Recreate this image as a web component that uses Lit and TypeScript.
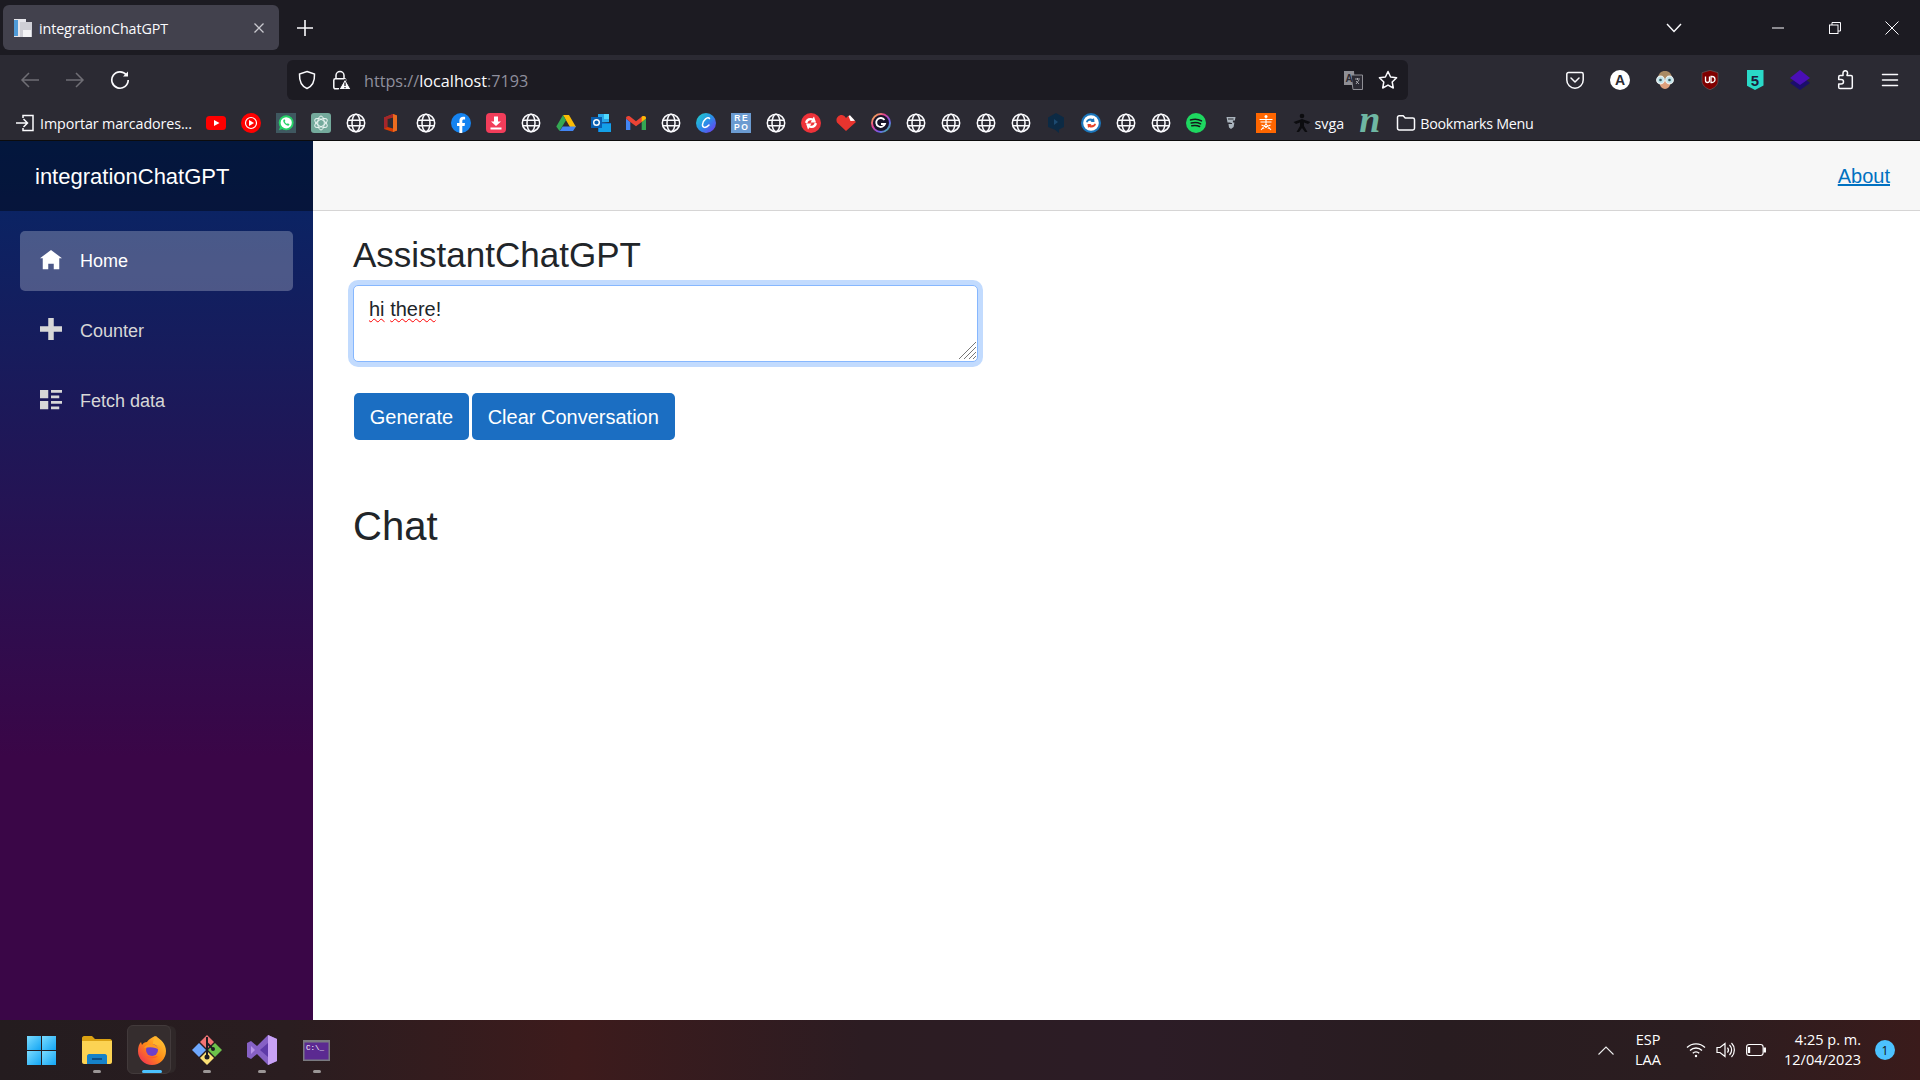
import { LitElement, html, svg, css, TemplateResult } from "lit";
import { customElement } from "lit/decorators.js";

const globe = html`<svg class="i20" viewBox="0 0 20 20" fill="none" stroke="#fbfbfe" stroke-width="1.5"><circle cx="10" cy="10" r="8.7"/><ellipse cx="10" cy="10" rx="4" ry="8.7"/><path d="M1.6 7.2h16.8M1.6 12.8h16.8"/></svg>`;

const bookmarks: TemplateResult[] = [
  html`<svg class="i20" viewBox="0 0 20 20"><rect y="3" width="20" height="14" rx="3.5" fill="#f00"/><path d="M8 7l5.5 3L8 13z" fill="#fff"/></svg>`,
  html`<svg class="i20" viewBox="0 0 20 20"><circle cx="10" cy="10" r="10" fill="#f00"/><circle cx="10" cy="10" r="5.5" fill="none" stroke="#fff" stroke-width="1.2"/><path d="M8 7l5 3-5 3z" fill="#fff"/></svg>`,
  html`<svg class="i20" viewBox="0 0 20 20"><rect width="20" height="20" fill="#3f5860"/><circle cx="10.2" cy="9.8" r="7.5" fill="#25d366"/><path d="M3 17.2l1.3-4.4 3 3z" fill="#25d366"/><circle cx="10.2" cy="9.8" r="5.6" fill="#fff"/><path d="M7.6 6.8c-1 1 .1 3.2 1.5 4.4s3.2 2 4 1.1l.4-1-1.8-1-.7.7c-1-.4-1.8-1.2-2.3-2.2l.7-.7-.8-1.8z" fill="#25d366"/></svg>`,
  html`<svg class="i20" viewBox="0 0 20 20"><rect width="20" height="20" rx="3" fill="#74aa9c"/><g fill="none" stroke="#e8f3f0" stroke-width="1"><ellipse cx="10" cy="10" rx="3.3" ry="7"/><ellipse cx="10" cy="10" rx="3.3" ry="7" transform="rotate(60 10 10)"/><ellipse cx="10" cy="10" rx="3.3" ry="7" transform="rotate(120 10 10)"/></g></svg>`,
  globe,
  html`<svg class="i20" viewBox="0 0 20 20"><path d="M3 4.5L12 1l4 1.5v15L12 19l-9-3z" fill="#d83b01"/><path d="M3 4.5L12 1v3L6.5 6v8L3 16z" fill="#a4262c"/><path d="M6.5 6L12 4.5v11l-5.500-1.500z" fill="#2b2a33"/><path d="M12 1l4 1.500v15L12 19z" fill="#eb6c1f"/></svg>`,
  globe,
  html`<svg class="i20" viewBox="0 0 20 20"><circle cx="10" cy="10" r="10" fill="#1583f0"/><path d="M8.400 20v-7H6v-3h2.400V7.800c0-2.600 1.500-4 3.800-4 1 0 1.900.2 1.900.2v2.500h-1.200c-1.200 0-1.600.7-1.600 1.500V10H14l-.4 3h-2.300v7z" fill="#fff"/></svg>`,
  html`<svg class="i20" viewBox="0 0 20 20"><rect width="20" height="20" rx="4" fill="#f23d5a"/><path d="M8 3.500h4v5h3l-5 4.500-5-4.500h3z" fill="#fff"/><rect x="4.500" y="14.500" width="11" height="2" fill="#fff"/></svg>`,
  globe,
  html`<svg class="i20" viewBox="0 0 20 20"><path d="M7 2h6l7 12h-6z" fill="#fbbc04"/><path d="M7 2l3 5.200L3.500 18 .3 13.500z" fill="#34a853"/><path d="M6.700 13.500H20L17 18H3.700z" fill="#4285f4"/></svg>`,
  html`<svg class="i20" viewBox="0 0 20 20"><path d="M7 1h11v8H7z" fill="#28a8ea"/><path d="M13 1h5v5h-5z" fill="#50d9ff"/><path d="M7 9l13 1v9H7z" fill="#0f78d4"/><path d="M8 11l12 0v8H8z" fill="#14a0e8"/><rect y="4" width="11" height="11" fill="#0a5fb0"/><circle cx="5.500" cy="9.500" r="2.800" fill="none" stroke="#fff" stroke-width="1.400"/></svg>`,
  html`<svg class="i20" viewBox="0 0 20 20"><path d="M0 5.500V17h4.300V9z" fill="#4285f4"/><path d="M15.700 9v8H20V5.500z" fill="#34a853"/><path d="M0 5.500c0-2.500 2.500-3 4-2l6 4.800 6-4.800c1.500-1 4-.5 4 2L15.700 9 10 13.300 4.300 9 0 5.500z" fill="#ea4335"/><path d="M15.700 3.800v5.200L20 5.500c0-2.500-2.700-3-4.300-1.700z" fill="#fbbc04"/></svg>`,
  globe,
  html`<svg class="i20" viewBox="0 0 20 20"><defs><linearGradient id="cv" x1="0" y1="0" x2="1" y2="1"><stop offset="0" stop-color="#1fd4c8"/><stop offset=".5" stop-color="#2a8ee8"/><stop offset="1" stop-color="#7a2ff0"/></linearGradient></defs><circle cx="10" cy="10" r="10" fill="url(#cv)"/><path d="M13.500 5.500C12 3 7 7 6.500 11.500c-.4 3.500 3.500 4 6.500.5" fill="none" stroke="#fff" stroke-width="1.500" stroke-linecap="round"/></svg>`,
  html`<span class="repo"><span>RE</span><span>PO</span></span>`,
  globe,
  html`<svg class="i20" viewBox="0 0 20 20"><circle cx="10" cy="10" r="10" fill="#ee3239"/><path d="M4 9.500C4.500 6 8 4 11.500 5.500L13 3.500l2 6h-5.500l1.300-2C8.800 6.800 7 7.800 6.300 10.500z" fill="#fff"/><path d="M16 10.500c-.5 3.500-4 5.500-7.500 4L7 16.500l-2-6h5.500l-1.300 2c2 .7 3.800-.3 4.500-3z" fill="#fff"/></svg>`,
  html`<svg class="i20" viewBox="0 0 20 20"><path d="M10 18L1 9.500C-1 5 3 1.500 6 2c2 .3 3 1.500 4 3 1-1 2-2 3.500-2.500L20 9z" fill="#e8342e"/><path d="M12.500 3l1.500-.7L19 7.800 14.500 8z" fill="#fff"/></svg>`,
  html`<svg class="i20" viewBox="0 0 20 20"><defs><linearGradient id="gl" x1="0" y1="0" x2="1" y2="1"><stop offset="0" stop-color="#f4d03f"/><stop offset=".35" stop-color="#e8408f"/><stop offset=".7" stop-color="#6a5cf0"/><stop offset="1" stop-color="#3ddc84"/></linearGradient></defs><circle cx="10" cy="10" r="9" fill="#16152a" stroke="url(#gl)" stroke-width="2"/><path d="M13.500 7a4.500 4.500 0 1 0 .5 4H10" fill="none" stroke="#fff" stroke-width="1.800"/></svg>`,
  globe, globe, globe, globe,
  html`<svg class="i20" viewBox="0 0 20 20"><path d="M10 0l8 4.500V14l-5 2.500V20l-4-3.200L2 14V4.500z" fill="#0c2a44"/><path d="M8 6l4 3-4 3z" fill="#1c4a70"/></svg>`,
  html`<svg class="i20" viewBox="0 0 20 20"><circle cx="10" cy="10" r="10" fill="#1b76bc"/><circle cx="10" cy="10" r="7.800" fill="#fff"/><path d="M5 9c.5-3 4-4.500 7-3l1-1 .5 4H9.500l1-1c-2-.6-3.500 0-4 1.500z" fill="#1b76bc"/><path d="M15 11c-.5 3-4 4.500-7 3l-1 1-.5-4h4l-1 1c2 .6 3.500 0 4-1.500z" fill="#e5432a"/></svg>`,
  globe, globe,
  html`<svg class="i20" viewBox="0 0 20 20"><circle cx="10" cy="10" r="10" fill="#1ed760"/><path d="M4.500 7c3.500-1 8-.8 11 .9M5.200 10c3-.8 6.800-.6 9.400.8M5.800 12.800c2.500-.6 5.600-.4 7.800.7" fill="none" stroke="#14171a" stroke-width="1.500" stroke-linecap="round"/></svg>`,
  html`<svg class="i20" viewBox="0 0 20 20"><path d="M5.500 4h9l-.6 3.500h-2v2h1.500l-.8 4.500-2.600 2-2-1.500-.5-3.500h2v-1.500h-3z" fill="#aab4bd"/><path d="M7 5.500h5.500v1H7zM8 10h3v1H8z" fill="#2b2a33"/></svg>`,
  html`<svg class="i20" viewBox="0 0 20 20"><rect width="20" height="20" fill="#ff6600"/><circle cx="10" cy="3.600" r="1.500" fill="#fff"/><path d="M3.500 6.500h13M4.500 9h11M10 5.500v5.500M10 11L5 17M10 11l5 6M5.500 12l9 4M14.500 12l-9 4" stroke="#fff" stroke-width="1.100" fill="none"/></svg>`,
];

const person = html`<svg class="i20" viewBox="0 0 20 20"><circle cx="10" cy="3" r="2.300" fill="#0c0c0f"/><path d="M10 6L1.500 9 4 11l4-1.500V13l-3.500 6h2.500L10 15l3 4h2.500L12 13V9.500l4 1.500 2.500-2z" fill="#0c0c0f"/></svg>`;

const extensions: TemplateResult[] = [
  html`<svg class="i20" viewBox="0 0 20 20" fill="none" stroke="#fbfbfe" stroke-width="1.500"><path d="M3.500 2.500h13c1 0 1.700.7 1.700 1.700V10a8.200 8.200 0 0 1-16.400 0V4.200c0-1 .7-1.700 1.700-1.700z"/><path d="M6 8l4 4 4-4" stroke-linecap="round" stroke-linejoin="round"/></svg>`,
  html`<span class="anon">A</span>`,
  html`<svg class="i20" viewBox="0 0 20 20"><path d="M3 9C3 3.500 6 1 10 1s7 2.500 7 8z" fill="#a98a64"/><path d="M4 10h12c0 5-2.500 9-6 9s-6-4-6-9z" fill="#dd9f7c"/><circle cx="5.500" cy="10" r="3.800" fill="#bfe3ea" stroke="#eef2f2" stroke-width="1.200"/><circle cx="14.500" cy="10" r="3.800" fill="#bfe3ea" stroke="#eef2f2" stroke-width="1.200"/><circle cx="5.500" cy="10" r="1.300" fill="#38545c"/><circle cx="14.500" cy="10" r="1.300" fill="#38545c"/></svg>`,
  html`<svg class="i20" viewBox="0 0 20 20"><path d="M10 .3l8 2.400v8.300c0 4-3.500 7-8 8.700-4.500-1.700-8-4.700-8-8.700V2.700z" fill="#800000" stroke="#666" stroke-width=".6"/><path d="M5.500 6.500v4a2 2 0 0 0 4 0v-4" fill="none" stroke="#fff" stroke-width="1.300"/><path d="M11 6.500v6h1a3 3 0 0 0 0-6z" fill="none" stroke="#fff" stroke-width="1.300"/></svg>`,
  html`<span class="five">5</span>`,
  html`<svg class="i20" viewBox="0 0 20 20"><path d="M10 5L20 13l-10 7L0 13z" fill="#1b0f6b"/><path d="M10 0l10 8-10 7L0 8z" fill="#4a0fb5"/></svg>`,
  html`<svg class="i20" viewBox="0 0 20 20" fill="none" stroke="#fbfbfe" stroke-width="1.500" stroke-linejoin="round"><path d="M8 5.500V3a2.300 2.300 0 0 1 4.600 0c0 1-.6 1.600-.6 2.500H16c.8 0 1.300.6 1.300 1.300V17c0 .9-.6 1.500-1.400 1.500H5c-.8 0-1.300-.6-1.300-1.300V14H6c1.500 0 2.500-1 2.500-2.300S7.500 9.500 6 9.500H3.700V7c0-.8.600-1.500 1.400-1.500z"/></svg>`,
  html`<svg class="i20" viewBox="0 0 20 20" stroke="#fbfbfe" stroke-width="1.500" stroke-linecap="round"><path d="M2.500 4.500h15M2.500 10h15M2.500 15.500h15"/></svg>`,
];

const win = (x: number, y: number) => svg`<rect x=${x} y=${y} width="14" height="14" fill="url(#wn)"/>`;

@customElement("app-root")
export class AppRoot extends LitElement {
  static styles = css`
    :host { display: flex; flex-direction: column; width: 1920px; height: 1080px; overflow: hidden; font-family: "Liberation Sans", Arial, sans-serif; }
    svg { display: block; flex: none; }
    .i20 { width: 20px; height: 20px; }

    .tabs { height: 55px; flex: none; display: flex; align-items: flex-start; background: #1c1b22; color: #fbfbfe; padding-left: 3px; font-family: "Open Sans", sans-serif; }
    .tab { box-sizing: border-box; width: 276px; height: 45px; margin-top: 5px; display: flex; align-items: center; background: #42414d; border-radius: 6px; padding: 0 14px 0 10px; font-size: 14.3px; }
    .tab .title { margin-left: 6px; padding-top: 1px; flex: 1; letter-spacing: -0.1px; }
    .newtab { width: 45px; height: 45px; margin: 5px 0 0 3.500px; display: flex; align-items: center; justify-content: center; }
    .spacer { flex: 1; }
    .listall { width: 45px; height: 55px; display: flex; align-items: center; justify-content: center; margin-right: 53px; }
    .winbtn { width: 57px; height: 55px; display: flex; align-items: center; justify-content: center; }

    .toolbar { height: 50px; flex: none; display: flex; align-items: center; background: #2b2a33; padding: 0 7.500px; }
    .tbtn { width: 45px; height: 45px; display: flex; align-items: center; justify-content: center; flex: none; }
    .urlbar { box-sizing: border-box; flex: 1; height: 40px; margin: 0 144.500px; background: #1c1b22; border-radius: 6px; display: flex; align-items: center; padding: 0 10px; font-family: "Open Sans", sans-serif; font-size: 16.200px; color: #8f8f9d; }
    .urlbar .lock { margin-left: 14px; }
    .urlbar .url { margin-left: 13px; padding-top: 2px; flex: 1; white-space: nowrap; }
    .urlbar b { font-weight: 400; color: #fbfbfe; }
    .urlbar .star { margin-left: 15px; }
    .anon { width: 20px; height: 20px; border-radius: 50%; background: #fff; color: #2b2a33; font: 700 14px "Liberation Sans", sans-serif; display: flex; align-items: center; justify-content: center; }
    .five { width: 17px; height: 20px; background: #2ad9c8; color: #1c1b3a; font: 700 15px "Liberation Sans", sans-serif; display: flex; align-items: center; justify-content: center; clip-path: polygon(0 0, 100% 0, 100% 78%, 50% 100%, 0 78%); }

    .bookmarks { height: 35px; flex: none; display: flex; align-items: center; gap: 15.030px; background: #2b2a33; border-bottom: 1px solid #0c0c0d; padding-left: 15px; color: #fbfbfe; font-family: "Open Sans", sans-serif; font-size: 14.300px; }
    .bm { display: flex; align-items: center; flex: none; white-space: nowrap; }
    .bm > span:not(.repo) { padding-top: 1px; }
    .import { gap: 5px; width: 176px; letter-spacing: -0.1px; }
    .person { gap: 3px; }
    .repo { width: 20px; height: 20px; background: #6b9bd1; color: #fff; font: 700 8.500px/9px "Liberation Sans", sans-serif; letter-spacing: 1.500px; display: flex; flex-direction: column; align-items: center; justify-content: center; padding-left: 1px; box-sizing: border-box; }
    .nlogo { font: italic 700 38px/30px "Liberation Serif", serif; color: #6fb7a3; width: 21px; margin-top: -8px; }
    .folder { gap: 4px; margin-left: 1px; letter-spacing: -0.3px; }

    .page { flex: 1; min-height: 0; display: flex; background: #fff; color: #212529; }
    .side { width: 313px; flex: none; display: flex; flex-direction: column; background-image: linear-gradient(180deg, rgb(5, 39, 103) 0%, #3a0647 70%); }
    .brand { box-sizing: border-box; height: 70px; flex: none; display: flex; align-items: center; padding: 1px 0 0 35px; background: rgba(0, 0, 0, 0.4); color: #fff; font-size: 22px; }
    .nav { padding-top: 20px; display: flex; flex-direction: column; gap: 10px; }
    .link { box-sizing: border-box; height: 60px; margin-left: 20px; width: 273px; border-radius: 5px; display: flex; align-items: center; padding-left: 20px; color: #d7d7d7; font-size: 18px; }
    .link svg { width: 22px; height: 22px; margin-right: 18px; fill: currentColor; }
    .link svg.up { margin-top: -4px; }
    .link.on { background: rgba(255, 255, 255, 0.25); color: #fff; }

    .main { flex: 1; min-width: 0; display: flex; flex-direction: column; }
    .top { box-sizing: border-box; height: 70px; flex: none; display: flex; align-items: center; justify-content: flex-end; background: #f7f7f7; border-bottom: 1px solid #d6d5d5; padding: 1px 30px 0 0; }
    .top a { color: #0071c1; font-size: 20px; text-decoration: underline; }
    .content { padding: 23px 40px 0; display: flex; flex-direction: column; align-items: flex-start; }
    h3 { margin: 0 0 9px; font-size: 35px; line-height: 42px; font-weight: 400; }
    h2 { margin: 62px 0 0; font-size: 40px; line-height: 48px; font-weight: 400; }
    .ta { box-sizing: border-box; position: relative; width: 625px; height: 77px; border: 1px solid #86b7fe; border-radius: 5px; box-shadow: 0 0 0 5px #c2dbfe; padding: 8px 15px; font-size: 20px; line-height: 30px; background: #fff; }
    .sp { text-decoration: underline wavy #f00; text-decoration-thickness: 1px; text-underline-offset: 2px; text-decoration-skip-ink: none; }
    .grip { position: absolute; right: 0; bottom: 1px; width: 19px; height: 19px; }
    .btns { display: flex; gap: 3px; margin: 31px 0 0 1px; }
    .btn { box-sizing: border-box; height: 47px; padding: 1px 15.750px 0; border-radius: 5px; background: #1b6ec2; color: #fff; font-size: 20px; display: flex; align-items: center; }

    .taskbar { height: 60px; flex: none; display: flex; align-items: center; padding-left: 14px; color: #fff; font-family: "Open Sans", sans-serif; font-size: 14.500px; background: linear-gradient(90deg, #241c1f 0%, #2a1d20 15%, #3d1b1c 30%, #2c1c22 45%, #2c1c26 60%, #281c20 75%, #2b1d20 88%, #3a1b1b 100%); }
    .tk { position: relative; width: 55px; height: 60px; display: flex; align-items: center; justify-content: center; flex: none; }
    .tk .dot { position: absolute; left: 50%; bottom: 7px; width: 8px; height: 3px; margin-left: -4px; border-radius: 2px; background: #9b9696; }
    .tk.act::before { content: ""; position: absolute; left: 8px; top: 6px; width: 44px; height: 47px; border-radius: 6px; background: #2f2728; }
    .tk.act::after { content: ""; position: absolute; left: 3px; top: 5px; width: 44px; height: 49px; box-sizing: border-box; border-radius: 6px; background: #352d2e; border: 1px solid #423a3b; }
    .tk.act svg { position: relative; z-index: 1; }
    .tk.act .dot { width: 20px; margin-left: -10px; background: #4cc2ff; z-index: 1; }
    .tray { margin-left: auto; display: flex; align-items: center; padding-right: 25px; }
    .lang { width: 50px; margin-left: 9px; text-align: center; line-height: 20px; }
    .sys { display: flex; gap: 10px; margin: 0 0 0 13px; }
    .clock { width: 92px; text-align: right; line-height: 20px; margin-left: 3px; }
    .badge { width: 20px; height: 20px; margin-left: 14px; border-radius: 50%; background: #4cc2ff; color: #111; font-size: 12px; display: flex; align-items: center; justify-content: center; }
  `;

  render() {
    return html`
      <div class="tabs">
        <div class="tab">
          <svg class="i20" viewBox="0 0 20 20"><path d="M1 1h12v18H1z" fill="#e6e6ec"/><path d="M1 2h4v16H1z" fill="#4f9bd8"/><path d="M7 4h12v15H7z" fill="#cfcfd6"/><path d="M10 12h8v7h-8z" fill="#f4f4f6"/></svg>
          <span class="title">integrationChatGPT</span>
          <svg width="12" height="12" viewBox="0 0 12 12" stroke="#c9c9cf" stroke-width="1.300"><path d="M1.500 1.500l9 9M10.500 1.500l-9 9"/></svg>
        </div>
        <div class="newtab"><svg width="16" height="16" viewBox="0 0 16 16" stroke="#fbfbfe" stroke-width="1.600"><path d="M8 0v16M0 8h16"/></svg></div>
        <div class="spacer"></div>
        <div class="listall"><svg width="16" height="10" viewBox="0 0 16 10" fill="none" stroke="#fbfbfe" stroke-width="1.400"><path d="M1 1l7 7.500L15 1"/></svg></div>
        <div class="winbtn"><svg width="12" height="2" viewBox="0 0 12 2" stroke="#fbfbfe"><path d="M0 1h12"/></svg></div>
        <div class="winbtn"><svg width="12" height="12" viewBox="0 0 12 12" fill="none" stroke="#fbfbfe"><path d="M3 3V.5h8.500V9H9"/><rect x=".5" y="3" width="8.500" height="8.500"/></svg></div>
        <div class="winbtn"><svg width="14" height="14" viewBox="0 0 14 14" stroke="#fbfbfe"><path d="M.5.500l13 13M13.500.500l-13 13"/></svg></div>
      </div>

      <div class="toolbar">
        <div class="tbtn"><svg class="i20" viewBox="0 0 20 20" fill="none" stroke="#6f6e75" stroke-width="1.500"><path d="M19 10H2M9 3l-7 7 7 7"/></svg></div>
        <div class="tbtn"><svg class="i20" viewBox="0 0 20 20" fill="none" stroke="#6f6e75" stroke-width="1.500"><path d="M1 10h17M11 3l7 7-7 7"/></svg></div>
        <div class="tbtn"><svg class="i20" viewBox="0 0 20 20" fill="none" stroke="#fbfbfe" stroke-width="1.700"><path d="M16.500 5A8.200 8.200 0 1 0 18.200 10"/><path d="M18 1.500v5h-5z" fill="#fbfbfe" stroke="none"/></svg></div>
        <div class="urlbar">
          <svg class="i20" viewBox="0 0 20 20" fill="none" stroke="#fbfbfe" stroke-width="1.500"><path d="M10 1.500l7.500 2.500c.3 7-1.500 12-7.500 14.500C4 16 2.200 11 2.500 4z"/></svg>
          <svg class="i20 lock" viewBox="0 0 20 20"><path d="M5 9V5.500a4 4 0 0 1 8 0V9" fill="none" stroke="#fbfbfe" stroke-width="1.500"/><rect x="2.800" y="8.800" width="12" height="10" rx="1.500" fill="none" stroke="#fbfbfe" stroke-width="1.500"/><path d="M14 9l6 10.500H8z" fill="#fbfbfe" stroke="#1c1b22"/><path d="M14 12.500v3.500M14 17v1.200" stroke="#1c1b22" stroke-width="1.300"/></svg>
          <span class="url">https://<b>localhost</b>:7193</span>
          <svg class="i20" viewBox="0 0 20 20"><path d="M1 1h10l1 14H1z" fill="#8f8f95"/><path d="M8 5h11.500v14.500H10z" fill="#2b2a33" stroke="#8f8f95"/><text x="6" y="12" font-size="10" font-weight="700" fill="#2b2a33" text-anchor="middle" font-family="Liberation Sans">A</text><path d="M12 9h5M14.500 8v2M13 14l3-4M13 11l3 3" stroke="#bdbdc2" stroke-width=".8"/></svg>
          <svg class="i20 star" viewBox="0 0 20 20" fill="none" stroke="#fbfbfe" stroke-width="1.500" stroke-linejoin="round"><path d="M10 1.500l2.600 5.500 6 .8-4.400 4.200 1.100 6L10 15.100 4.700 18l1.100-6L1.400 7.800l6-.8z"/></svg>
        </div>
        ${extensions.map((e) => html`<div class="tbtn">${e}</div>`)}
      </div>

      <div class="bookmarks">
        <div class="bm import">
          <svg class="i20" viewBox="0 0 20 20" fill="none" stroke="#fbfbfe" stroke-width="1.500"><path d="M8 5V2.500h10v15H8V15"/><path d="M1 10h11M8.500 6l4 4-4 4"/></svg>
          <span>Importar marcadores...</span>
        </div>
        ${bookmarks.map((b) => html`<div class="bm">${b}</div>`)}
        <div class="bm person">${person}<span>svga</span></div>
        <div class="bm nlogo">n</div>
        <div class="bm folder">
          <svg class="i20" viewBox="0 0 20 20" fill="none" stroke="#fbfbfe" stroke-width="1.500" stroke-linejoin="round"><path d="M1.500 4.500c0-1 .7-1.700 1.700-1.700h4l2 2.200h7.600c1 0 1.700.7 1.700 1.700v8.600c0 1-.7 1.700-1.700 1.700H3.200c-1 0-1.700-.7-1.700-1.700z"/></svg>
          <span>Bookmarks Menu</span>
        </div>
      </div>

      <div class="page">
        <aside class="side">
          <div class="brand">integrationChatGPT</div>
          <nav class="nav">
            <div class="link on"><svg viewBox="0 0 8 8"><path d="M4 0l-4 3h1v4h2v-2h2v2h2v-4.030l1 .03-4-3z"/></svg>Home</div>
            <div class="link"><svg class="up" viewBox="0 0 8 8"><path d="M3 0v3h-3v2h3v3h2v-3h3v-2h-3v-3h-2z"/></svg>Counter</div>
            <div class="link"><svg viewBox="0 0 8 8"><path d="M0 0v3h3v-3h-3zm4 0v1h4v-1h-4zm0 2v1h3v-1h-3zm-4 2v3h3v-3h-3zm4 0v1h4v-1h-4zm0 2v1h3v-1h-3z"/></svg>Fetch data</div>
          </nav>
        </aside>
        <main class="main">
          <div class="top"><a>About</a></div>
          <div class="content">
            <h3>AssistantChatGPT</h3>
            <div class="ta"><span class="sp">hi</span> <span class="sp">there</span>!
              <svg class="grip" viewBox="0 0 19 19" stroke="#777" stroke-width="1"><path d="M1 18L18 1M6 18L18 6M11 18l7-7M15 18l3-3"/></svg>
            </div>
            <div class="btns"><div class="btn">Generate</div><div class="btn">Clear Conversation</div></div>
            <h2>Chat</h2>
          </div>
        </main>
      </div>

      <div class="taskbar">
        <div class="tk"><svg width="29" height="29" viewBox="0 0 29 29"><defs><linearGradient id="wn" x1="0" y1="0" x2="1" y2="1"><stop offset="0" stop-color="#7bdcff"/><stop offset="1" stop-color="#12a5f4"/></linearGradient></defs>${win(0, 0)}${win(15, 0)}${win(0, 15)}${win(15, 15)}</svg></div>
        <div class="tk"><svg width="30" height="28" viewBox="0 0 30 28"><path d="M0 2c0-1 1-2 2-2h8l3 3h15c1 0 2 1 2 2v4H0z" fill="#dba213"/><path d="M0 5h30v21c0 1-1 2-2 2H2c-1 0-2-1-2-2z" fill="#fcd353"/><path d="M5 20c0-1 1-2 2-2h16c1 0 2 1 2 2v8H5z" fill="#1682c9"/><path d="M10 23h10" stroke="#0b3f73" stroke-width="1.500"/></svg><span class="dot"></span></div>
        <div class="tk act"><svg width="30" height="30" viewBox="0 0 30 30"><defs><linearGradient id="ff" x1="1" y1="0" x2="0" y2="1"><stop offset="0" stop-color="#ffd43d"/><stop offset=".5" stop-color="#ff8a16"/><stop offset="1" stop-color="#f01f5f"/></linearGradient></defs><path d="M18 1c6 3 11 8 11 15a14 14 0 0 1-28 0c0-4 1-7 3-9l1 3c1-2 3-3 5-3 1-2 4-4 8-6z" fill="url(#ff)"/><path d="M19 1c3 3 5 6 5 10l-8-2c0-3 1-6 3-8z" fill="#ffb52e"/><circle cx="15" cy="15" r="6" fill="#6e3fc9"/><path d="M7 13c3-5 12-6 15 2-3-3-9-3.500-15-2z" fill="#ff9a1f"/><path d="M9 21c3 3 9 3 12 0-3 1-9 1-12 0z" fill="#ff5a2c"/></svg><span class="dot"></span></div>
        <div class="tk"><svg width="30" height="30" viewBox="0 0 30 30"><path d="M15 0l7 7-7 7-7-7z" fill="#f27474"/><path d="M23 8l7 7-7 7-7-7z" fill="#6cc24a"/><path d="M15 16l7 7-7 7-7-7z" fill="#fbe074"/><path d="M7 8l7 7-7 7-7-7z" fill="#6ea8fe"/><path d="M15 2v21M15 8l5 5" stroke="#1c1b22" stroke-width="2" fill="none"/><circle cx="15" cy="22" r="2.500" fill="#1c1b22"/><circle cx="21" cy="14" r="2" fill="#1c1b22"/></svg><span class="dot"></span></div>
        <div class="tk"><svg width="30" height="30" viewBox="0 0 30 30"><path d="M21 0l9 4v22l-9 4-11-11-6 5-4-2V8l4-2 6 5z" fill="#8661c5"/><path d="M21 0l9 4v22l-9 4z" fill="#c8a2f5"/><path d="M21 8v14l-8-7z" fill="#5e3aa8"/><path d="M4 11v8l4-4z" fill="#b794e8"/></svg><span class="dot"></span></div>
        <div class="tk"><svg width="27" height="21" viewBox="0 0 27 21"><rect width="27" height="21" fill="#7a7a80"/><rect x="1.500" y="2.500" width="24" height="17" fill="#5b2a91"/><text x="3" y="10" font-size="7.500" fill="#fff" font-family="Liberation Mono">C:\\_</text></svg><span class="dot"></span></div>
        <div class="tray">
          <svg width="16" height="9" viewBox="0 0 16 9" fill="none" stroke="#eee" stroke-width="1.100"><path d="M.5 8.500L8 1l7.500 7.500"/></svg>
          <div class="lang">ESP<br />LAA</div>
          <div class="sys">
            <svg class="i20" viewBox="0 0 20 20" fill="none" stroke="#fff" stroke-width="1.300"><path d="M1 7.500a13 13 0 0 1 18 0M4 10.500a8.500 8.500 0 0 1 12 0M6.800 13.300a4.500 4.500 0 0 1 6.400 0"/><circle cx="10" cy="16" r="1.200" fill="#fff" stroke="none"/></svg>
            <svg class="i20" viewBox="0 0 20 20" fill="none" stroke="#fff" stroke-width="1.200"><path d="M1 7.500h3L9 3.500v13l-5-4H1z"/><path d="M11.500 7.500a4 4 0 0 1 0 5M13.500 5a7 7 0 0 1 0 10M15.500 3a10 10 0 0 1 0 14"/></svg>
            <svg class="i20" viewBox="0 0 20 20" fill="none" stroke="#fff" stroke-width="1.100"><rect x=".6" y="4.500" width="16.500" height="11" rx="2.500"/><path d="M3 7v6" stroke-width="2.400"/><path d="M18 8h1.400v4H18z" fill="#fff"/></svg>
          </div>
          <div class="clock">4:25 p. m.<br />12/04/2023</div>
          <div class="badge">1</div>
        </div>
      </div>
    `;
  }
}
